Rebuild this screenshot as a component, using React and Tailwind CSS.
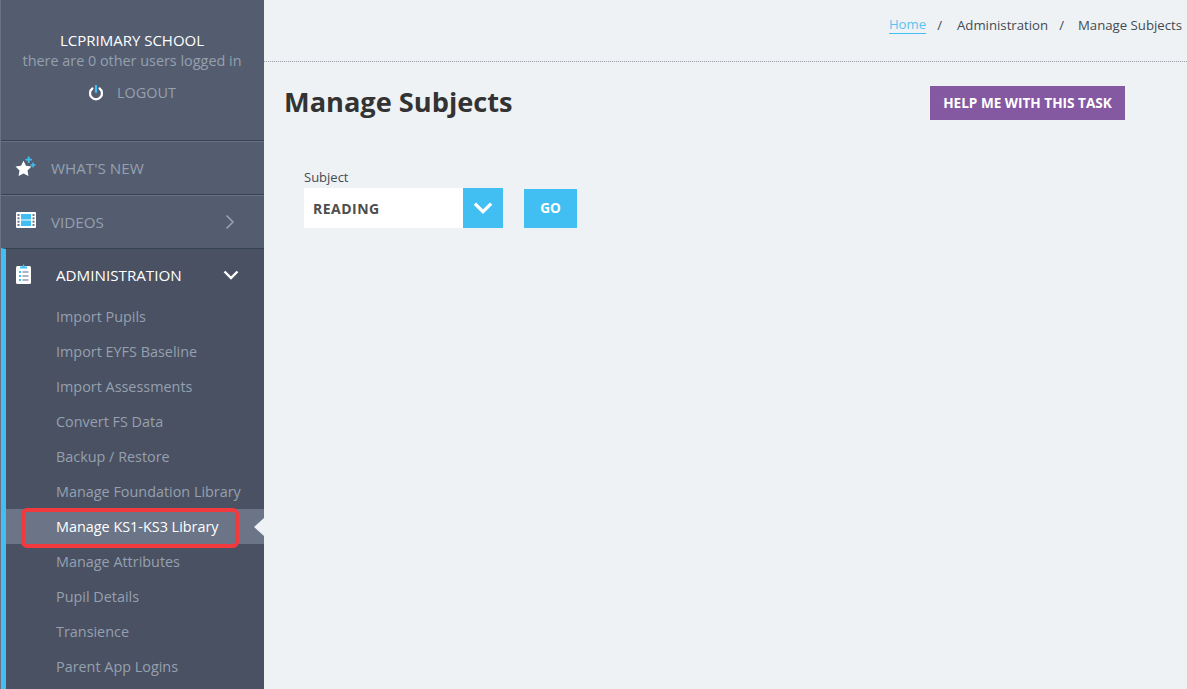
import React from 'react';

const subItems = [
  'Import Pupils',
  'Import EYFS Baseline',
  'Import Assessments',
  'Convert FS Data',
  'Backup / Restore',
  'Manage Foundation Library',
  'Manage KS1-KS3 Library',
  'Manage Attributes',
  'Pupil Details',
  'Transience',
  'Parent App Logins',
];

const StarIcon = () => (
  <svg width="22" height="22" viewBox="0 0 22 22" className="shrink-0 -mt-[2px]">
    <path d="M8.500 4.800l2.500 5 5.500.8-4 3.900.95 5.500-4.950-2.600-4.950 2.600.95-5.500-4-3.900 5.500-.8z" fill="#fff" />
    <path d="M12.800 .5h1.800v2.300h2.300v1.800h-2.300v2.300h-1.800V4.600h-2.300V2.800h2.300z" fill="#41bff2" />
    <path d="M17.300 6.500h1.400v1.800h1.800v1.400h-1.800v1.800h-1.400V9.700h-1.800V8.300h1.800z" fill="#41bff2" />
  </svg>
);

const FilmIcon = () => (
  <svg width="20" height="16" viewBox="0 0 20 16" className="shrink-0 -mt-[4px]">
    <rect x="0" y="0" width="20" height="16" rx="1" fill="#fff" />
    <rect x="5" y="2" width="10" height="5.500" fill="#41bff2" />
    <rect x="5" y="8.500" width="10" height="5.500" fill="#41bff2" />
    <g fill="#6f7888">
      <rect x="1.500" y="2" width="2" height="2" />
      <rect x="1.500" y="5.300" width="2" height="2" />
      <rect x="1.500" y="8.700" width="2" height="2" />
      <rect x="1.500" y="12" width="2" height="2" />
      <rect x="16.500" y="2" width="2" height="2" />
      <rect x="16.500" y="5.300" width="2" height="2" />
      <rect x="16.500" y="8.700" width="2" height="2" />
      <rect x="16.500" y="12" width="2" height="2" />
    </g>
  </svg>
);

const ClipboardIcon = () => (
  <svg width="16" height="20" viewBox="0 0 16 20" className="shrink-0 -mt-[2px]">
    <rect x="0" y="2" width="15" height="18" rx="1.500" fill="#fff" />
    <path d="M4 4.500V2.500h2.200L7.500 0 8.800 2.500H11v2z" fill="#41bff2" />
    <g fill="#41bff2">
      <rect x="3" y="7" width="2" height="2" />
      <rect x="3" y="11" width="2" height="2" />
      <rect x="3" y="15" width="2" height="2" />
    </g>
    <g fill="#8d96a5">
      <rect x="6.500" y="7.300" width="6" height="1.400" />
      <rect x="6.500" y="11.300" width="6" height="1.400" />
      <rect x="6.500" y="15.300" width="6" height="1.400" />
    </g>
  </svg>
);

const PowerIcon = () => (
  <svg width="16" height="16" viewBox="0 0 16 16" className="shrink-0">
    <path d="M4.400 3.500a6 6 0 1 0 7.200 0" fill="none" stroke="#fff" strokeWidth="2.200" strokeLinecap="round" />
    <path d="M8 1v6" fill="none" stroke="#41bff2" strokeWidth="2.200" strokeLinecap="round" />
  </svg>
);

const ChevronDown = ({ size = 16, width = 2 }) => (
  <svg width={size} height={size} viewBox="0 0 16 16" className="shrink-0">
    <path d="M1.500 4.500L8 11l6.500-6.500" fill="none" stroke="#fff" strokeWidth={width} />
  </svg>
);

const ChevronRight = () => (
  <svg width="16" height="16" viewBox="0 0 16 16" className="shrink-0">
    <path d="M4.500 1.500L11 8l-6.500 6.500" fill="none" stroke="#95a0b0" strokeWidth="1.600" />
  </svg>
);

const App = () => {
  return (
    <div className="w-[1187px] h-[689px] overflow-hidden flex bg-[#eef2f5] font-['Open_Sans',sans-serif]">
      <aside className="w-[264px] shrink-0 h-full flex flex-col border-l border-[#6a7283] bg-[#545d6f]">
        <div className="h-[140px] shrink-0 pt-[30px] flex flex-col items-center pr-[1px]">
          <div className="text-[15px] leading-[20px] text-white">LCPRIMARY SCHOOL</div>
          <div className="text-[14.4px] leading-[22px] text-[#95a0b0]">there are 0 other users logged in</div>
          <div className="mt-[11px] ml-[2px] flex items-center gap-[13px] pr-[2px]">
            <PowerIcon />
            <span className="text-[14.4px] leading-[20px] text-[#95a0b0]">LOGOUT</span>
          </div>
        </div>

        <div className="h-[54px] shrink-0 flex items-center pl-[14px] pt-[1px] border-t border-[#35424f] shadow-[inset_0_1px_0_#6a7283]">
          <div className="w-[36px]"><StarIcon /></div>
          <span className="text-[15.2px] text-[#95a0b0]">WHAT'S NEW</span>
        </div>

        <div className="h-[54px] shrink-0 flex items-center pl-[15px] pr-[26px] pt-[1px] border-t border-[#35424f] shadow-[inset_0_1px_0_#6a7283]">
          <div className="w-[35px]"><FilmIcon /></div>
          <span className="text-[15.2px] text-[#95a0b0] flex-1">VIDEOS</span>
          <ChevronRight />
        </div>

        <div className="flex-1 bg-[#4a5162] pt-[1px] border-t border-[#35424f] border-l-[5px] border-l-[#41bff2]">
          <div className="h-[50px] flex items-center pl-[10px] pr-[25px]">
            <div className="w-[40px]"><ClipboardIcon /></div>
            <span className="text-[15.2px] text-white flex-1">ADMINISTRATION</span>
            <ChevronDown width={2.400} />
          </div>
          <ul className="-mt-[1px]">
            {subItems.map((item) =>
              item === 'Manage KS1-KS3 Library' ? (
                <li key={item} className="relative h-[35px] flex items-center pl-[50px] text-[14.4px] text-white bg-[#6b7587]">
                  {item}
                  <span className="absolute left-[15px] -top-[1px] w-[218px] h-[40px] border-4 border-[#f03a3e] rounded-[6px]" />
                  <span className="absolute right-0 top-[9px] w-0 h-0 border-y-[9px] border-y-transparent border-r-[10px] border-r-[#eef2f5]" />
                </li>
              ) : (
                <li key={item} className="h-[35px] flex items-center pl-[50px] text-[14.4px] text-[#95a0b0]">
                  {item}
                </li>
              )
            )}
          </ul>
        </div>
      </aside>

      <main className="flex-1 min-w-0">
        <div className="h-[62px] flex items-start justify-end pt-[16px] pr-[5px] border-b border-dotted border-[#9a9fa5] text-[13.2px] leading-[18px] text-[#444b52]">
          <span className="text-[#5ac4f0] border-b border-[#41bff2] leading-[17px]">Home</span>
          <span className="ml-[11px]">/</span>
          <span className="ml-[15px]">Administration</span>
          <span className="ml-[11px]">/</span>
          <span className="ml-[14px]">Manage Subjects</span>
        </div>

        <div className="flex items-start pl-[20px] pt-[23px]">
          <h1 className="flex-1 text-[27.2px] leading-[34px] font-bold text-[#333]">Manage Subjects</h1>
          <button className="mr-[62px] mt-[1px] h-[34px] w-[195px] bg-[#8559a2] text-white text-[13.6px] font-bold">
            HELP ME WITH THIS TASK
          </button>
        </div>

        <div className="pl-[40px] pt-[48px]">
          <label className="block text-[13px] leading-[18px] text-[#444b52]">Subject</label>
          <div className="flex mt-[2px]">
            <div className="flex w-[199px] h-[40px] bg-white">
              <div className="flex-1 flex items-center pl-[9px] text-[14px] font-bold tracking-[0.5px] text-[#4d4d4d]">READING</div>
              <div className="w-[40px] flex items-center justify-center bg-[#41bff2]">
                <ChevronDown size={20} width={2.600} />
              </div>
            </div>
            <button className="ml-[21px] mt-[1px] h-[39px] w-[53px] bg-[#41bff2] text-white text-[13.6px] font-bold">GO</button>
          </div>
        </div>
      </main>
    </div>
  );
};

export default App;
